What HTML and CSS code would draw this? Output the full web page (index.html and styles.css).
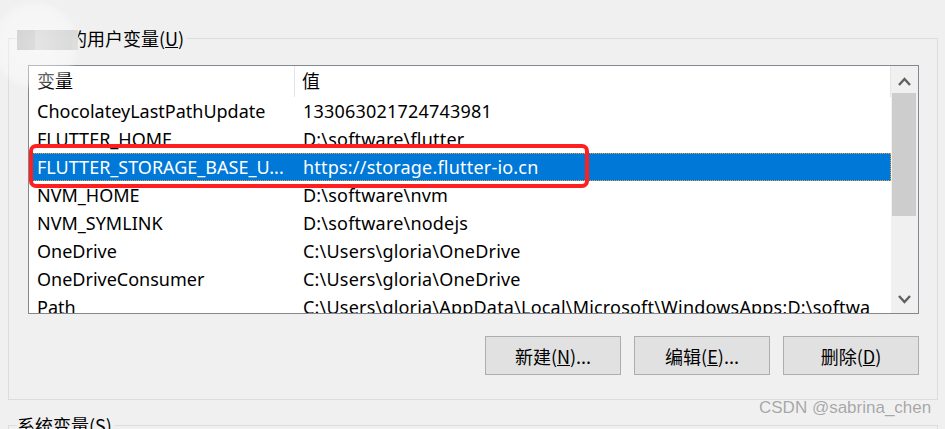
FILE: index.html
```html
<!DOCTYPE html>
<html lang="zh-CN">
<head>
<meta charset="utf-8">
<title>环境变量</title>
<link rel="stylesheet" href="styles.css">
</head>
<body>
<div class="window">
  <fieldset class="group">
    <legend class="group-title"><span class="mosaic"></span>的用户变量(<u>U</u>)</legend>
    <div class="listbox">
      <div class="list">
        <div class="row header"><div class="c1">变量</div><div class="c2">值</div></div>
        <div class="row"><div class="c1">ChocolateyLastPathUpdate</div><div class="c2">133063021724743981</div></div>
        <div class="row"><div class="c1">FLUTTER_HOME</div><div class="c2">D:\software\flutter</div></div>
        <div class="row selected"><div class="c1">FLUTTER_STORAGE_BASE_U...</div><div class="c2">https://storage.flutter-io.cn</div></div>
        <div class="row"><div class="c1">NVM_HOME</div><div class="c2">D:\software\nvm</div></div>
        <div class="row"><div class="c1">NVM_SYMLINK</div><div class="c2">D:\software\nodejs</div></div>
        <div class="row"><div class="c1">OneDrive</div><div class="c2">C:\Users\gloria\OneDrive</div></div>
        <div class="row"><div class="c1">OneDriveConsumer</div><div class="c2">C:\Users\gloria\OneDrive</div></div>
        <div class="row"><div class="c1">Path</div><div class="c2">C:\Users\gloria\AppData\Local\Microsoft\WindowsApps;D:\softwa</div></div>
      </div>
      <div class="scrollbar">
        <div class="sb-btn">
          <svg width="27" height="27" viewBox="0 0 27 27"><polyline points="8,19 13.5,13 19,19" fill="none" stroke="#606060" stroke-width="2.4"/></svg>
        </div>
        <div class="sb-track"><div class="sb-thumb"></div></div>
        <div class="sb-btn">
          <svg width="27" height="27" viewBox="0 0 27 27"><polyline points="8,10 13.5,16 19,10" fill="none" stroke="#606060" stroke-width="2.4"/></svg>
        </div>
      </div>
      <div class="annot"></div>
    </div>
    <div class="buttons">
      <button class="btn">新建(<u>N</u>)...</button>
      <button class="btn">编辑(<u>E</u>)...</button>
      <button class="btn">删除(<u>D</u>)</button>
    </div>
  </fieldset>
  <fieldset class="group second">
    <legend class="group-title">系统变量(<u>S</u>)</legend>
  </fieldset>
  <div class="watermark">CSDN @sabrina_chen</div>
</div>
</body>
</html>
```

FILE: styles.css
```css
html, body {
  margin: 0;
  padding: 0;
}
body {
  background: #f0f0f0;
  width: 945px;
  height: 429px;
  overflow: hidden;
  font-family: "Noto Sans", "Noto Sans CJK SC", sans-serif;
  font-size: 18px;
  color: #000;
}
.window {
  position: relative;
  height: 429px;
  overflow: hidden;
  padding-top: 26px;
  box-sizing: border-box;
}
.window::before {
  content: "";
  position: absolute;
  left: -10px;
  top: 0;
  width: 90px;
  height: 90px;
  border-radius: 50%;
  background: radial-gradient(circle, rgba(255,255,255,0.55) 0, rgba(255,255,255,0.35) 60%, rgba(255,255,255,0) 72%);
  z-index: 2;
  pointer-events: none;
}
.group {
  margin: 0 7px 0 8px;
  border: 1px solid #dcdcdc;
  padding: 0 18px 24px 19px;
  min-width: 0;
}
.group-title {
  margin-left: -11px;
  padding: 0 3px 0 0;
  line-height: 24px;
  height: 24px;
  font-size: 18px;
  font-family: "Noto Sans CJK SC", "Noto Sans", sans-serif;
}
.mosaic {
  position: relative;
  z-index: 1;
  display: inline-block;
  vertical-align: top;
  margin-top: 4px;
  width: 61px;
  height: 20px;
  margin-right: -9px;
  background: linear-gradient(to right, #b4b4b4 0, #b4b4b4 18px, #c6c6c6 18px, #c6c6c6 54px, #dadada 61px);
}
.listbox {
  position: relative;
  margin-top: 15px;
  box-sizing: border-box;
  width: 891px;
  height: 249px;
  border: 1px solid #828790;
  background: #fff;
  display: flex;
}
.list {
  flex: 1;
  overflow: hidden;
}
.row {
  display: flex;
  height: 28px;
  align-items: center;
  white-space: nowrap;
}
.row.header {
  height: 31px;
  padding-top: 2px;
  box-sizing: border-box;
}
.row .c1 {
  width: 266px;
  box-sizing: border-box;
  padding-left: 8px;
  overflow: hidden;
}
.row .c2 {
  flex: 1;
  padding-left: 8px;
  overflow: hidden;
  letter-spacing: 0.2px;
}
.row.header .c1 {
  font-family: "Noto Sans CJK SC", sans-serif;
  height: 31px;
  line-height: 29px;
  margin-top: -2px;
  border-right: 1px solid #e5e5e5;
}
.row.header .c2 {
  font-family: "Noto Sans CJK SC", sans-serif;
  height: 31px;
  line-height: 29px;
  margin-top: -2px;
  padding-left: 7px;
  border-right: 1px solid #e5e5e5;
}
.row.selected {
  background: #0078d7;
  color: #fff;
  outline: 1px dotted #f0a030;
  outline-offset: -1px;
}
.scrollbar {
  width: 27px;
  background: #f0f0f0;
  display: flex;
  flex-direction: column;
}
.sb-btn {
  height: 27px;
}
.sb-btn svg {
  display: block;
}
.sb-track {
  flex: 1;
  padding: 0 2px 0 1px;
}
.sb-thumb {
  height: 123px;
  background: #cdcdcd;
}
.annot {
  position: absolute;
  left: 0;
  top: 78px;
  width: 560px;
  height: 44px;
  box-sizing: border-box;
  border: 4px solid #ff1f1f;
  border-radius: 7px;
}
.buttons {
  margin-top: 22px;
  display: flex;
  justify-content: flex-end;
  gap: 13px;
}
.btn {
  width: 136px;
  height: 39px;
  border: 1px solid #adadad;
  background: #e1e1e1;
  font-family: "Noto Sans CJK SC", "Noto Sans", sans-serif;
  font-size: 18px;
  color: #000;
  padding: 0;
}
.second {
  margin-top: 13px;
  height: 30px;
}
.watermark {
  position: absolute;
  left: 759px;
  top: 398px;
  font-family: "Liberation Sans", Arial, sans-serif;
  font-size: 17px;
  color: #a6a6a6;
  text-shadow: 0 0 1px #fff;
}
```
